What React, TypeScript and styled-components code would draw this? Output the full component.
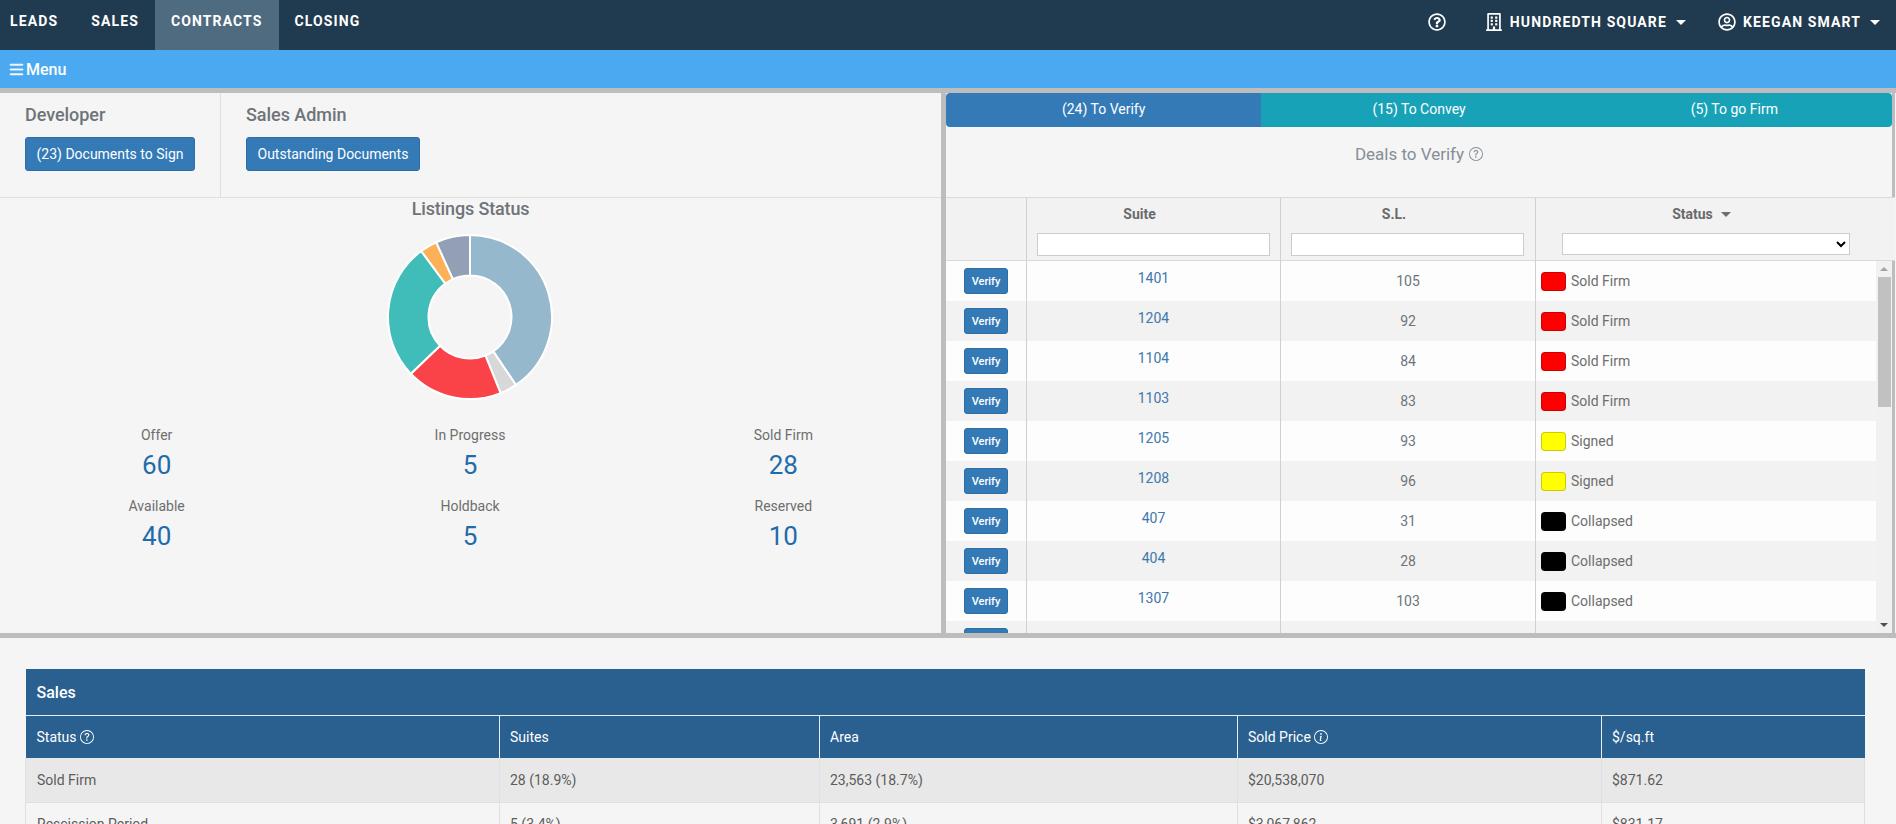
import React from "react";
import styled, { createGlobalStyle } from "styled-components";
import { FaRegBuilding, FaRegQuestionCircle, FaRegUserCircle } from "react-icons/fa";
import { BsInfoCircle, BsList, BsQuestionCircle } from "react-icons/bs";

const Global = createGlobalStyle`
  html, body { margin: 0; padding: 0; height: 824px; overflow: hidden; background: #f5f5f5; }
  * { box-sizing: border-box; }
  body { font-family: Roboto, "Liberation Sans", sans-serif; font-size: 14px; color: #6c757d; }
`;

const Nav = styled.nav`
  height: 50px;
  background: #203a4f;
  display: flex;
  justify-content: space-between;
  color: #fff;
`;
const NavGroup = styled.div`
  display: flex;
  align-items: stretch;
`;
const NavTab = styled.a<{ $active?: boolean; $first?: boolean }>`
  padding: 13px ${(p) => (p.$first ? "17px" : "16px")} 0 ${(p) => (p.$first ? "10px" : "16px")};
  font-size: 14px;
  font-weight: 700;
  letter-spacing: 1.12px;
  line-height: 16px;
  background: ${(p) => (p.$active ? "#4f6b80" : "transparent")};
`;
const NavTools = styled.div`
  display: flex;
  align-items: flex-start;
  padding: 13px 16px 0 0;
  font-size: 14px;
  font-weight: 700;
  letter-spacing: 1.12px;
  line-height: 16px;
`;
const NavTool = styled.span<{ $gap: number }>`
  display: inline-flex;
  align-items: center;
  gap: 7px;
  margin-left: ${(p) => p.$gap}px;
  svg { font-size: 18px; }
`;
const Caret = styled.i<{ $color?: string }>`
  display: inline-block;
  width: 0;
  height: 0;
  margin-left: 2px;
  border-left: 5px solid transparent;
  border-right: 5px solid transparent;
  border-top: 5px solid ${(p) => p.$color ?? "#fff"};
`;
const MenuBar = styled.div`
  height: 38px;
  background: #4aa9f1;
  color: #fff;
  display: flex;
  align-items: center;
  padding-left: 7px;
  gap: 0;
  font-size: 16px;
  font-weight: 500;
  svg { font-size: 19px; stroke: currentColor; stroke-width: 0.6; }
`;
const Panels = styled.div`
  display: grid;
  grid-template-columns: 941px 5px 1fr;
  grid-template-rows: minmax(0, 1fr);
  height: 550px;
  border-top: 5px solid #bdbdbd;
  border-bottom: 5px solid #bdbdbd;
`;
const LeftPanel = styled.section`
  display: flex;
  flex-direction: column;
`;
const Splitter = styled.div`
  background: #bdbdbd;
`;
const Roles = styled.div`
  display: flex;
  height: 105px;
  border-bottom: 1px solid #dfdfdf;
`;
const Role = styled.div<{ $w: number; $bordered?: boolean }>`
  width: ${(p) => p.$w}px;
  padding: 10px 0 0 25px;
  border-right: ${(p) => (p.$bordered ? "1px solid #dfdfdf" : "none")};
`;
const RoleTitle = styled.h3`
  margin: 0 0 11px;
  font-size: 18px;
  line-height: 23px;
  font-weight: 500;
  letter-spacing: -0.05px;
  color: #6f7479;
`;
const PrimaryButton = styled.button`
  display: block;
  background: #337ab7;
  border: 1px solid #2e6da4;
  border-radius: 3px;
  color: #fff;
  font: 400 14px/20px Roboto, sans-serif;
  padding: 6px 10.5px;
  white-space: nowrap;
`;
const ChartTitle = styled.h3`
  margin: 0;
  text-align: center;
  font-size: 18px;
  line-height: 22px;
  font-weight: 500;
  letter-spacing: -0.15px;
  color: #6f7479;
`;
const ChartWrap = styled.div`
  display: flex;
  justify-content: center;
  margin: 14px 2px 0 0;
  svg { display: block; }
`;
const Stats = styled.div`
  display: grid;
  grid-template-columns: 1fr 1fr 1fr;
  grid-auto-rows: 71px;
  padding: 26px 0 0;
  text-align: center;
  width: 940px;
`;
const Stat = styled.div`
  display: flex;
  flex-direction: column;
  align-items: center;
`;
const StatLabel = styled.span`
  font-size: 14px;
  line-height: 18px;
  color: #6e6e6e;
`;
const StatValue = styled.span`
  margin-top: 4px;
  font-size: 26px;
  line-height: 34px;
  color: #1f6cab;
`;
const RightPanel = styled.section`
  display: flex;
  flex-direction: column;
  margin-right: 1px;
  border-right: 3px solid #bdbdbd;
  min-width: 0;
  min-height: 0;
`;
const Tabs = styled.div`
  display: grid;
  grid-template-columns: repeat(3, 1fr);
  height: 34px;
  border-radius: 4px;
  overflow: hidden;
  flex: none;
`;
const Tab = styled.div<{ $active?: boolean }>`
  background: ${(p) => (p.$active ? "#337ab7" : "#17a2b8")};
  color: #fff;
  text-align: center;
  line-height: 32px;
  font-size: 14px;
`;
const DealsTitle = styled.h4`
  margin: 0;
  height: 70px;
  padding-top: 17px;
  text-align: center;
  font-size: 17px;
  line-height: 20px;
  font-weight: 400;
  color: #868e96;
  svg { font-size: 14px; margin-left: 5px; vertical-align: -1px; }
`;
const HeadRow = styled.div`
  display: grid;
  grid-template-columns: 80px 254px 255px 1fr;
  height: 64px;
  margin-right: -3px;
  background: #f2f2f2;
  border-top: 1px solid #d9d9d9;
  border-bottom: 1px solid #d9d9d9;
  flex: none;
`;
const HeadCell = styled.div<{ $left?: boolean }>`
  display: flex;
  flex-direction: column;
  border-left: ${(p) => (p.$left ? "1px solid #d0d0d0" : "none")};
`;
const HeadLabel = styled.div`
  height: 35px;
  padding: 7px 28px 0 0;
  line-height: 18px;
  font-weight: 700;
  font-size: 14px;
  color: #6a6a6a;
  text-align: center;
  ${Caret} { margin-left: 8px; vertical-align: 2px; }
`;
const FilterInput = styled.input`
  display: block;
  margin: 0 10px;
  width: 233px;
  height: 23px;
  border: 1px solid #ccc;
  background: #fff;
  padding: 0;
`;
const FilterSelect = styled.select`
  display: block;
  margin: 0 0 0 26px;
  width: 288px;
  height: 22px;
  border: 1px solid #ccc;
  border-radius: 0;
  background-color: #fff;
  padding: 0;
`;
const BodyWrap = styled.div`
  flex: 1;
  min-height: 0;
  display: flex;
  overflow: hidden;
`;
const Rows = styled.div`
  flex: 1;
  min-width: 0;
  overflow: hidden;
`;
const DataRow = styled.div<{ $even: boolean }>`
  display: grid;
  grid-template-columns: 80px 254px 255px 1fr;
  height: 40px;
  background: ${(p) => (p.$even ? "#f2f2f2" : "#fdfdfd")};
`;
const Cell = styled.div<{ $left?: boolean }>`
  border-left: ${(p) => (p.$left ? "1px solid #d0d0d0" : "none")};
  display: flex;
  align-items: center;
  justify-content: center;
`;
const SuiteCell = styled(Cell)`
  align-items: flex-start;
  padding-top: 8px;
  color: #3e78ab;
  line-height: 18px;
`;
const StatusCell = styled(Cell)`
  justify-content: flex-start;
  padding-left: 5px;
  gap: 5px;
  color: #6e6e6e;
`;
const VerifyButton = styled.button`
  width: 44px;
  height: 26px;
  background: #337ab7;
  border: 1px solid #2e6da4;
  border-radius: 3px;
  color: #fff;
  font: 500 11px/1 Roboto, sans-serif;
  padding: 0;
`;
const Swatch = styled.i<{ $color: string }>`
  display: block;
  width: 25px;
  height: 19px;
  border-radius: 4px;
  background: ${(p) => p.$color};
  border: 1px solid rgba(0, 0, 0, 0.2);
`;
const ScrollTrack = styled.div`
  width: 16px;
  flex: none;
  background: #f1f1f1;
  display: flex;
  flex-direction: column;
  align-items: center;
`;
const ScrollArrow = styled.div<{ $down?: boolean }>`
  height: 16px;
  flex: none;
  display: flex;
  align-items: center;
  justify-content: center;
  &::before {
    content: "";
    border-left: 4px solid transparent;
    border-right: 4px solid transparent;
    ${(p) => (p.$down ? "border-top: 4px solid #505050;" : "border-bottom: 4px solid #a3a3a3;")}
  }
`;
const ScrollThumb = styled.div`
  width: 13px;
  height: 130px;
  background: #c1c1c1;
`;
const ScrollRest = styled.div`
  flex: 1;
`;
const SalesSection = styled.section`
  padding: 31px 31px 0 25px;
`;
const SalesTable = styled.table`
  width: 100%;
  border-collapse: collapse;
  table-layout: fixed;
  font-size: 14px;
`;
const SalesTitle = styled.th`
  background: #2a6090;
  color: #fff;
  height: 46px;
  padding: 2px 11px 0;
  text-align: left;
  font-size: 16px;
  font-weight: 500;
`;
const SalesHead = styled.th`
  background: #2a6090;
  color: #fff;
  height: 43px;
  padding: 0 10px;
  text-align: left;
  font-weight: 400;
  border: 1px solid #e6eef5;
  border-bottom: none;
  &:first-child { border-left: none; padding-left: 11px; }
  &:last-child { border-right: none; }
  svg { font-size: 14px; margin-left: 3px; vertical-align: -2px; }
`;
const SalesCell = styled.td<{ $even: boolean }>`
  height: 44px;
  padding: 0 10px;
  color: #5c5c5c;
  background: ${(p) => (p.$even ? "#e8e8e8" : "#f5f5f5")};
  border: 1px solid #e0e0e0;
  border-top: none;
  &:first-child { padding-left: 11px; }
`;
const SalesCol = styled.col<{ $w?: number }>`
  width: ${(p) => (p.$w ? `${p.$w}px` : "auto")};
`;

const slices = [
  { v: 60, c: "#96b8cd" },
  { v: 5, c: "#d8d8d8" },
  { v: 28, c: "#fa4349" },
  { v: 40, c: "#40bdb8" },
  { v: 5, c: "#fcb158" },
  { v: 10, c: "#929fb5" },
];

function arc(cx: number, cy: number, r: number, r0: number, a0: number, a1: number) {
  const pt = (rad: number, a: number) => `${(cx + rad * Math.sin(a)).toFixed(2)} ${(cy - rad * Math.cos(a)).toFixed(2)}`;
  const large = a1 - a0 > Math.PI ? 1 : 0;
  return `M${pt(r, a0)}A${r} ${r} 0 ${large} 1 ${pt(r, a1)}L${pt(r0, a1)}A${r0} ${r0} 0 ${large} 0 ${pt(r0, a0)}Z`;
}

function Donut() {
  const total = slices.reduce((s, x) => s + x.v, 0);
  let a = 0;
  return (
    <svg width="166" height="166" viewBox="0 0 166 166">
      {slices.map((s) => {
        const a0 = a;
        a += (s.v / total) * Math.PI * 2;
        return <path key={s.c} d={arc(83, 83, 82, 41.5, a0, a)} fill={s.c} stroke="#fff" strokeWidth="2" />;
      })}
    </svg>
  );
}

const stats = [
  ["Offer", "60"],
  ["In Progress", "5"],
  ["Sold Firm", "28"],
  ["Available", "40"],
  ["Holdback", "5"],
  ["Reserved", "10"],
];

const deals: [string, string, string, string][] = [
  ["1401", "105", "#ff0000", "Sold Firm"],
  ["1204", "92", "#ff0000", "Sold Firm"],
  ["1104", "84", "#ff0000", "Sold Firm"],
  ["1103", "83", "#ff0000", "Sold Firm"],
  ["1205", "93", "#ffff00", "Signed"],
  ["1208", "96", "#ffff00", "Signed"],
  ["407", "31", "#000000", "Collapsed"],
  ["404", "28", "#000000", "Collapsed"],
  ["1307", "103", "#000000", "Collapsed"],
  ["", "", "", ""],
];

const sales = [
  ["Sold Firm", "28 (18.9%)", "23,563 (18.7%)", "$20,538,070", "$871.62"],
  ["Rescission Period", "5 (3.4%)", "3,691 (2.9%)", "$3,067,862", "$831.17"],
];

export default function App() {
  return (
    <>
      <Global />
      <Nav>
        <NavGroup>
          <NavTab $first>LEADS</NavTab>
          <NavTab>SALES</NavTab>
          <NavTab $active>CONTRACTS</NavTab>
          <NavTab>CLOSING</NavTab>
        </NavGroup>
        <NavTools>
          <NavTool $gap={0}><FaRegQuestionCircle /></NavTool>
          <NavTool $gap={39}><FaRegBuilding />HUNDREDTH SQUARE <Caret /></NavTool>
          <NavTool $gap={32}><FaRegUserCircle />KEEGAN SMART <Caret /></NavTool>
        </NavTools>
      </Nav>
      <MenuBar><BsList />Menu</MenuBar>
      <Panels>
        <LeftPanel>
          <Roles>
            <Role $w={221} $bordered>
              <RoleTitle>Developer</RoleTitle>
              <PrimaryButton>(23) Documents to Sign</PrimaryButton>
            </Role>
            <Role $w={300}>
              <RoleTitle>Sales Admin</RoleTitle>
              <PrimaryButton>Outstanding Documents</PrimaryButton>
            </Role>
          </Roles>
          <ChartTitle>Listings Status</ChartTitle>
          <ChartWrap><Donut /></ChartWrap>
          <Stats>
            {stats.map(([l, v]) => (
              <Stat key={l}>
                <StatLabel>{l}</StatLabel>
                <StatValue>{v}</StatValue>
              </Stat>
            ))}
          </Stats>
        </LeftPanel>
        <Splitter />
        <RightPanel>
          <Tabs>
            <Tab $active>(24) To Verify</Tab>
            <Tab>(15) To Convey</Tab>
            <Tab>(5) To go Firm</Tab>
          </Tabs>
          <DealsTitle>Deals to Verify<BsQuestionCircle /></DealsTitle>
          <HeadRow>
            <HeadCell />
            <HeadCell $left>
              <HeadLabel>Suite</HeadLabel>
              <FilterInput />
            </HeadCell>
            <HeadCell $left>
              <HeadLabel>S.L.</HeadLabel>
              <FilterInput />
            </HeadCell>
            <HeadCell $left>
              <HeadLabel>Status<Caret $color="#6e6e6e" /></HeadLabel>
              <FilterSelect />
            </HeadCell>
          </HeadRow>
          <BodyWrap>
            <Rows>
              {deals.map(([suite, sl, color, status], i) => (
                <DataRow key={i} $even={i % 2 === 1}>
                  <Cell><VerifyButton>Verify</VerifyButton></Cell>
                  <SuiteCell $left>{suite}</SuiteCell>
                  <Cell $left>{sl}</Cell>
                  <StatusCell $left>
                    {color && <Swatch $color={color} />}
                    {status}
                  </StatusCell>
                </DataRow>
              ))}
            </Rows>
            <ScrollTrack>
              <ScrollArrow />
              <ScrollThumb />
              <ScrollRest />
              <ScrollArrow $down />
            </ScrollTrack>
          </BodyWrap>
        </RightPanel>
      </Panels>
      <SalesSection>
        <SalesTable>
          <colgroup>
            <SalesCol $w={474} />
            <SalesCol $w={320} />
            <SalesCol $w={418} />
            <SalesCol $w={364} />
            <SalesCol />
          </colgroup>
          <thead>
            <tr><SalesTitle colSpan={5}>Sales</SalesTitle></tr>
            <tr>
              <SalesHead>Status<BsQuestionCircle /></SalesHead>
              <SalesHead>Suites</SalesHead>
              <SalesHead>Area</SalesHead>
              <SalesHead>Sold Price<BsInfoCircle /></SalesHead>
              <SalesHead>$/sq.ft</SalesHead>
            </tr>
          </thead>
          <tbody>
            {sales.map((r, i) => (
              <tr key={r[0]}>
                {r.map((c) => <SalesCell key={c} $even={i % 2 === 0}>{c}</SalesCell>)}
              </tr>
            ))}
          </tbody>
        </SalesTable>
      </SalesSection>
    </>
  );
}
